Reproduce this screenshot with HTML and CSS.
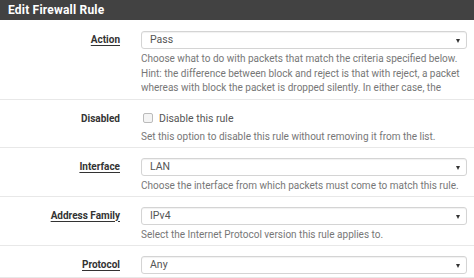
FILE: index.html
```html
<!DOCTYPE html>
<html lang="en">
  <head>
    <meta charset="UTF-8" />
    <meta name="viewport" content="width=device-width, initial-scale=1.0" />
    <title>Edit Firewall Rule</title>
    <link rel="stylesheet" href="styles.css">
  </head>
  <body>
    <div class="panel">
      <div class="panel-heading">Edit Firewall Rule</div>

      <div class="form-row first">
        <div class="form-label"><span class="ul">Action</span></div>
        <div class="form-field">
          <div class="select">Pass<span class="caret"></span></div>
          <div class="help multi">
            <div class="line">Choose what to do with packets that match the criteria specified below.</div>
            <div class="line">Hint: the difference between block and reject is that with reject, a packet</div>
            <div class="line">whereas with block the packet is dropped silently. In either case, the</div>
          </div>
        </div>
      </div>

      <div class="form-row">
        <div class="form-label">Disabled</div>
        <div class="form-field">
          <label class="check"><span class="box"></span>Disable this rule</label>
          <div class="help">Set this option to disable this rule without removing it from the list.</div>
        </div>
      </div>

      <div class="form-row">
        <div class="form-label"><span class="ul">Interface</span></div>
        <div class="form-field">
          <div class="select">LAN<span class="caret"></span></div>
          <div class="help">Choose the interface from which packets must come to match this rule.</div>
        </div>
      </div>

      <div class="form-row">
        <div class="form-label"><span class="ul">Address Family</span></div>
        <div class="form-field">
          <div class="select">IPv4<span class="caret"></span></div>
          <div class="help">Select the Internet Protocol version this rule applies to.</div>
        </div>
      </div>

      <div class="form-row">
        <div class="form-label"><span class="ul">Protocol</span></div>
        <div class="form-field">
          <div class="select">Any<span class="caret"></span></div>
        </div>
      </div>
    </div>
  </body>
</html>
```

FILE: styles.css
```css
body {
  margin: 0;
  background: #fff;
  font-family: Roboto, "Liberation Sans", sans-serif;
  color: #333;
}
.panel {
  width: 474px;
  height: 278px;
  overflow: hidden;
}
.panel-heading {
  height: 20px;
  line-height: 20px;
  background-color: #424242;
  color: #fff;
  font-weight: bold;
  font-size: 12px;
  padding-left: 8px;
  letter-spacing: 0.2px;
}
.form-row {
  display: flex;
  padding: 10px 7px 3px 0;
  border-bottom: 1px solid #e8e8e8;
}
.form-row.first {
  padding-top: 11px;
}
.form-label {
  width: 120px;
  flex-shrink: 0;
  text-align: right;
  font-size: 10px;
  font-weight: bold;
  line-height: 17px;
  color: #333;
}
.form-label .ul {
  text-decoration: underline;
  text-underline-offset: 2px;
}
.form-field {
  margin-left: 21px;
  flex: 1;
  min-width: 0;
}
.select {
  position: relative;
  height: 18px;
  line-height: 16px;
  border: 1px solid #d4d4d4;
  border-radius: 3px;
  box-shadow: inset 0 1px 1px rgba(0, 0, 0, 0.06);
  padding-left: 8px;
  font-size: 10.5px;
  color: #555;
  box-sizing: border-box;
}
.caret {
  position: absolute;
  right: 6px;
  top: 7px;
  border-left: 2.5px solid transparent;
  border-right: 2.5px solid transparent;
  border-top: 4px solid #333;
}
.help {
  margin-top: 3px;
  font-size: 10px;
  line-height: 14px;
  color: #777;
  white-space: nowrap;
  overflow: hidden;
}
.help.multi {
  line-height: 14.5px;
}
.check {
  display: flex;
  align-items: center;
  height: 17px;
  font-size: 10.5px;
  color: #555;
}
.box {
  width: 8px;
  height: 8px;
  border: 1px solid #bbb;
  border-radius: 2px;
  background: #f4f4f4;
  margin: 0 6px 0 2px;
}
```
